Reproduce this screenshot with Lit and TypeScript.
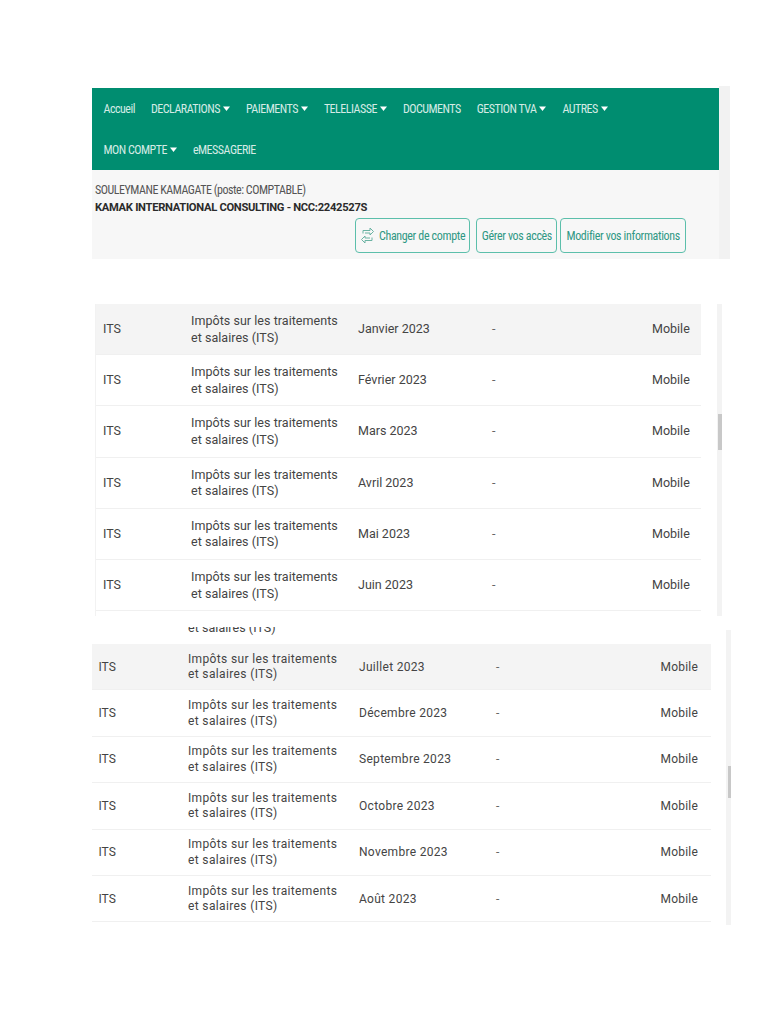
import { LitElement, html, css } from "lit";
import { customElement } from "lit/decorators.js";

const nav1 = [["Accueil",0],["DECLARATIONS",1],["PAIEMENTS",1],["TELELIASSE",1],["DOCUMENTS",0],["GESTION TVA",1],["AUTRES",1]] as const;
const nav2 = [["MON COMPTE",1],["eMESSAGERIE",0]] as const;
const t1 = ["Janvier 2023","Février 2023","Mars 2023","Avril 2023","Mai 2023","Juin 2023"];
const t2 = ["Juillet 2023","Décembre 2023","Septembre 2023","Octobre 2023","Novembre 2023","Août 2023"];

@customElement("app-root")
export class AppRoot extends LitElement {
  static styles = css`
    :host { display:block; width:768px; height:1024px; background:#fff; overflow:hidden; font-family:Roboto,"Liberation Sans",sans-serif; color:#333; }
    .page { display:flex; flex-direction:column; padding-top:86px; }
    .top { display:flex; margin-left:92px; width:638px; height:173px; }
    .panel { width:627px; margin-top:2px; background:#f7f7f7; }
    .topbar { width:11px; background:#f2f2f2; }
    .nav { background:#008d70; height:82px; box-sizing:border-box; padding-left:11.5px; display:flex; flex-direction:column; }
    .navrow { display:flex; gap:16px; height:41px; align-items:center; }
    .navitem { display:flex; align-items:center; gap:3px; color:#d5ebe5; font-size:12px; font-stretch:78%; letter-spacing:-.5px; white-space:nowrap; }
    .caret { width:7px; height:5px; fill:#fff; }
    .who { padding:11px 0 0 3px; font-size:12px; line-height:18px; color:#555; font-stretch:78%; letter-spacing:-.47px; height:34px; }
    .co { font-weight:700; color:#2b2b2b; font-stretch:100%; letter-spacing:-.3px; font-size:11.2px; vertical-align:1px; }
    .btns { display:flex; margin:3px 0 0 263px; }
    .btn { box-sizing:border-box; height:35px; border:1px solid #5cbfab; border-radius:4px; display:flex; align-items:center; gap:4px; padding:0 5px; color:#2f9884; font-size:12px; font-stretch:78%; letter-spacing:-.35px; white-space:nowrap; }
    .btn:nth-child(1) { margin-right:6px; padding:0 4px; }
    .btn:nth-child(2) { margin-right:3px; padding:0 4.5px; }
    .btn svg { width:15px; height:17px; fill:none; stroke:#6bb3a3; stroke-width:1; }
    .t1wrap { display:flex; margin:45px 0 0 95px; height:312px; }
    .t1 { width:606px; border-left:1px solid #f2f2f2; box-sizing:border-box; }
    .sb1 { width:5px; margin-left:16px; background:#f3f3f3; padding-top:110px; box-sizing:border-box; }
    .thumb1 { height:36px; margin-left:1px; background:#c8c8c8; }
    .row { display:grid; align-items:center; box-sizing:border-box; border-bottom:1px solid #f0f0f0; }
    .t1 .row { grid-template-columns:95px 167px 134px 160px 1fr; height:51.2px; font-size:12.5px; color:#444; padding-bottom:1px; }
    .t1 .row .name { line-height:16.5px; letter-spacing:.04px; margin-top:2px; }
    .row.hl { background:#f4f4f4; }
    .code { padding-left:6.5px; }
    .t1 .code { padding-left:7px; }
    .mob { text-align:right; padding-right:12px; color:#444; }
    .t1 .mob { padding-right:12.5px; }
    .dash { color:#666; }
    .clipped { height:8px; margin:11px 0 0 0; overflow:hidden; display:flex; }
    .clipped span { margin:-8.5px 0 0 188px; font-size:12.5px; line-height:17px; letter-spacing:.05px; color:#444; }
    .t2wrap { display:flex; margin:-5px 0 0 92px; height:295px; }
    .t2 { width:619px; padding-top:14px; }
    .sb2 { width:5px; margin-left:15px; background:#f3f3f3; padding-top:136px; box-sizing:border-box; }
    .thumb2 { height:32px; margin-left:2px; background:#c8c8c8; }
    .t2 .row { grid-template-columns:96px 171px 137px 163px 1fr; height:46.4px; font-size:12px; color:#444; }
    .t2 .row .name { line-height:15.5px; letter-spacing:.36px; margin-top:1px; }
    .t2 .date { letter-spacing:.3px; }
    .t2 .mob { padding-right:13px; letter-spacing:.2px; }
  `;

  private caret() { return html`<svg class="caret" viewBox="0 0 7 5"><path d="M0 .5h7L3.5 5z"/></svg>`; }
  private navRow(items: readonly (readonly [string, number])[]) {
    return html`<div class="navrow">${items.map(([l, c]) => html`<span class="navitem">${l}${c ? this.caret() : ""}</span>`)}</div>`;
  }
  private rows(list: string[]) {
    return list.map((d, i) => html`<div class="row ${i === 0 ? "hl" : ""}">
      <span class="code">ITS</span>
      <span class="name">Impôts sur les traitements<br />et salaires (ITS)</span>
      <span class="date">${d}</span>
      <span class="dash">-</span>
      <span class="mob">Mobile</span>
    </div>`);
  }
  render() {
    return html`<div class="page">
      <div class="top">
        <div class="panel">
          <div class="nav">${this.navRow(nav1)}${this.navRow(nav2)}</div>
          <div class="who">SOULEYMANE KAMAGATE (poste: COMPTABLE)<br /><span class="co">KAMAK INTERNATIONAL CONSULTING - NCC:2242527S</span></div>
          <div class="btns">
            <span class="btn"><svg viewBox="0 0 15 17"><path d="M3 6.5V3.5h7V1l3.5 3.5L10 8V6H5M12 10.5v3H5V16l-3.5-3.5L5 9v2h5"/></svg>Changer de compte</span>
            <span class="btn">Gérer vos accès</span>
            <span class="btn">Modifier vos informations</span>
          </div>
        </div>
        <div class="topbar"></div>
      </div>
      <div class="t1wrap">
        <div class="t1">${this.rows(t1)}</div>
        <div class="sb1"><div class="thumb1"></div></div>
      </div>
      <div class="clipped"><span>et salaires (ITS)</span></div>
      <div class="t2wrap">
        <div class="t2">${this.rows(t2)}</div>
        <div class="sb2"><div class="thumb2"></div></div>
      </div>
    </div>`;
  }
}
